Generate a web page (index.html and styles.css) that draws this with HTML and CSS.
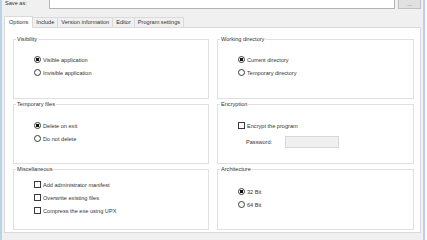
FILE: index.html
```html
<!DOCTYPE html>
<html lang="en">
<head>
  <meta charset="UTF-8">
  <title>Options</title>
  <link rel="stylesheet" href="styles.css">
</head>
<body>
  <div class="app">
    <div class="topbar">
      <label class="save-label" for="save-as">Save as:</label>
      <input type="text" id="save-as" class="save-input">
      <button class="browse-btn">...</button>
    </div>
    <div class="tabs">
      <div class="tab active">Options</div>
      <div class="tab">Include</div>
      <div class="tab">Version information</div>
      <div class="tab">Editor</div>
      <div class="tab">Program settings</div>
    </div>
    <div class="panel">
      <fieldset class="group">
        <legend>Visibility</legend>
        <div class="opts pt-10">
          <label class="opt"><input type="radio" name="vis" checked>Visible application</label>
          <label class="opt"><input type="radio" name="vis">Invisible application</label>
        </div>
      </fieldset>
      <fieldset class="group">
        <legend>Working directory</legend>
        <div class="opts pt-10">
          <label class="opt"><input type="radio" name="dir" checked>Current directory</label>
          <label class="opt"><input type="radio" name="dir">Temporary directory</label>
        </div>
      </fieldset>
      <fieldset class="group">
        <legend>Temporary files</legend>
        <div class="opts pt-11">
          <label class="opt"><input type="radio" name="tmp" checked>Delete on exit</label>
          <label class="opt"><input type="radio" name="tmp">Do not delete</label>
        </div>
      </fieldset>
      <fieldset class="group">
        <legend>Encryption</legend>
        <div class="opts pt-11">
          <label class="opt"><input type="checkbox">Encrypt the program</label>
          <div class="pass-row">
            <span class="pass-label">Password:</span>
            <input type="password" class="pass-input" disabled>
          </div>
        </div>
      </fieldset>
      <fieldset class="group">
        <legend>Miscellaneous</legend>
        <div class="opts pt-5">
          <label class="opt"><input type="checkbox">Add administrator manifest</label>
          <label class="opt"><input type="checkbox">Overwrite existing files</label>
          <label class="opt"><input type="checkbox">Compress the exe using UPX</label>
        </div>
      </fieldset>
      <fieldset class="group">
        <legend>Architecture</legend>
        <div class="opts pt-12">
          <label class="opt"><input type="radio" name="arch" checked>32 Bit</label>
          <label class="opt"><input type="radio" name="arch">64 Bit</label>
        </div>
      </fieldset>
    </div>
  </div>
</body>
</html>
```

FILE: styles.css
```css
* {
    box-sizing: border-box;
}
body {
    margin: 0;
    width: 427px;
    height: 240px;
    overflow: hidden;
    background: #fbfbfb;
    font-family: 'Liberation Sans', Arial, sans-serif;
    font-size: 5.6px;
    color: #333;
}
.app {
    width: 425px;
    height: 240px;
    padding: 0 2px;
    background: #f0f0f0;
    border-left: 2px solid #bcd2e8;
    border-right: 2px solid #bcd2e8;
}
.topbar {
    display: flex;
    height: 9px;
    align-items: stretch;
}
.save-label {
    width: 45px;
    padding-left: 1px;
    line-height: 7px;
}
.save-input {
    flex: 1;
    margin: 0 3px 0 0;
    padding: 0;
    border: 1px solid #b4b4b4;
    border-top: none;
    background: #fff;
}
.browse-btn {
    width: 23px;
    padding: 0;
    margin: 0;
    border: 1px solid #c0c0c0;
    border-top: none;
    background: #e1e1e1;
    font-family: inherit;
    font-size: 5.6px;
    line-height: 5px;
    color: #555;
}
.tabs {
    display: flex;
    align-items: flex-end;
    height: 11px;
    margin-top: 7px;
}
.tab {
    height: 10px;
    padding: 0 3px;
    line-height: 9px;
    border: 1px solid #dadada;
    border-bottom: none;
    margin-left: -1px;
    background: #f0f0f0;
}
.tab.active {
    position: relative;
    height: 12px;
    margin: 0 0 -1px 0;
    padding: 0 4px;
    line-height: 11px;
    background: #fff;
    z-index: 1;
}
.panel {
    height: 206px;
    border: 1px solid #dadada;
    background: #fff;
    padding: 7px 5px 0 8px;
    display: grid;
    grid-template-columns: 196px 197px;
    grid-template-rows: 64px 64px 65px;
    column-gap: 8px;
    row-gap: 1px;
}
.group {
    margin: 0;
    padding: 0;
    min-width: 0;
    border: 1px solid #e0e0e0;
}
.group legend {
    margin-left: 2px;
    padding: 0 1px;
    line-height: 8px;
}
.opts {
    display: flex;
    flex-direction: column;
    padding-left: 20px;
}
.pt-5 { padding-top: 5px; }
.pt-10 { padding-top: 10px; }
.pt-11 { padding-top: 11px; }
.pt-12 { padding-top: 12px; }
.opt {
    display: flex;
    align-items: center;
    height: 13px;
}
.opt input {
    appearance: none;
    width: 7px;
    height: 7px;
    margin: 0 2px 0 0;
    border: 1px solid #3a3a3a;
    background: #fff;
}
.opt input[type="radio"] {
    border-radius: 50%;
}
.opt input[type="radio"]:checked {
    background: radial-gradient(circle, #111 0 1.6px, #fff 2px);
}
.pass-row {
    display: flex;
    align-items: center;
    height: 12px;
    margin-top: 4px;
    padding-left: 8px;
}
.pass-label {
    width: 39px;
}
.pass-input {
    width: 54px;
    height: 12px;
    margin: 0;
    border: 1px solid #d8d8d8;
    background: #f0f0f0;
}
```
